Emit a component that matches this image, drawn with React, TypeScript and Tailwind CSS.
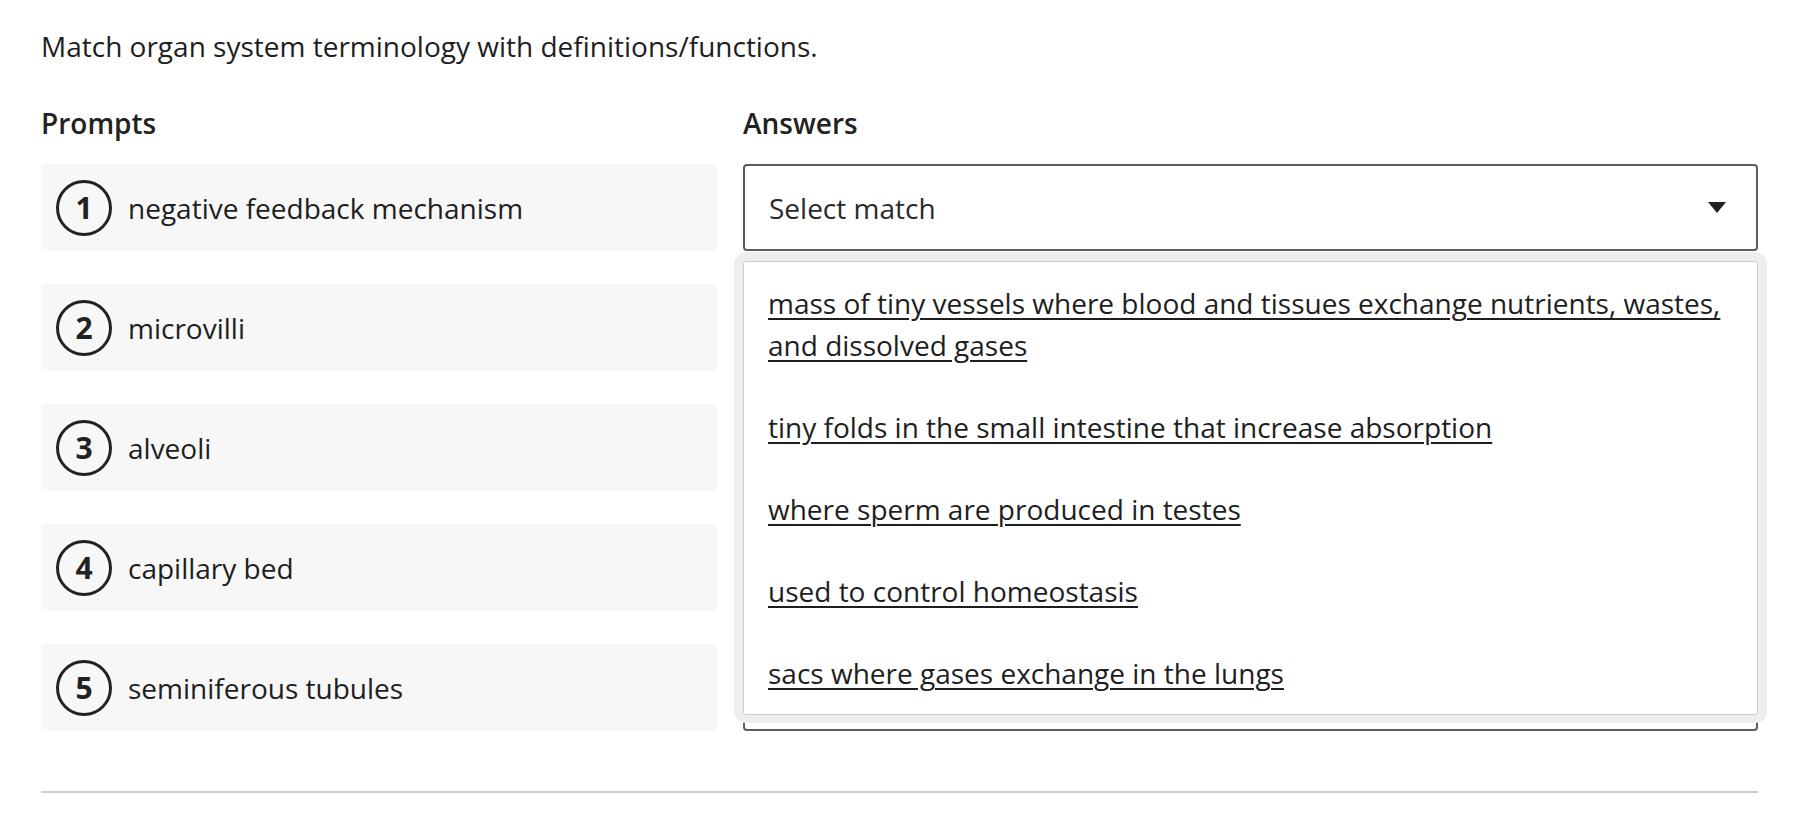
import React from "react"

const prompts = [
  "negative feedback mechanism",
  "microvilli",
  "alveoli",
  "capillary bed",
  "seminiferous tubules",
]

const options = [
  "mass of tiny vessels where blood and tissues exchange nutrients, wastes, and dissolved gases",
  "tiny folds in the small intestine that increase absorption",
  "where sperm are produced in testes",
  "used to control homeostasis",
  "sacs where gases exchange in the lungs",
]

export default function App() {
  return (
    <div className="min-h-screen bg-white pl-[41px] pr-[46px] pt-[25px] font-['Open_Sans',sans-serif] text-[28px] leading-[42px] text-[#1e1e1e]">
      <p>Match organ system terminology with definitions/functions.</p>

      <div className="mt-[35px] flex gap-[26px]">
        {/* Prompts */}
        <div className="w-[676px] shrink-0">
          <h2 className="font-semibold text-[#222]">Prompts</h2>
          <div className="mt-[20px] flex flex-col gap-[33px]">
            {prompts.map((p, i) => (
              <div
                key={p}
                className="flex h-[87px] items-center rounded-[4px] bg-[#f7f7f7] pl-[15px]"
              >
                <span className="flex h-[56px] w-[56px] shrink-0 items-center justify-center rounded-full border-[3.5px] border-[#222] text-[30px] font-bold text-[#222]">
                  {i + 1}
                </span>
                <span className="ml-[16px]">{p}</span>
              </div>
            ))}
          </div>
        </div>

        {/* Answers */}
        <div className="w-[1015px] shrink-0">
          <h2 className="font-semibold text-[#222]">Answers</h2>
          <div className="relative mt-[20px] flex flex-col gap-[33px]">
            {prompts.map((p, i) => (
              <div
                key={p}
                className="flex h-[87px] items-center justify-between rounded-[4px] border-2 border-[#5c5c5c] bg-white pl-[24px] pr-[30px]"
              >
                <span className="text-[#2a2a2a]">{i === 0 ? "Select match" : ""}</span>
                <svg width="18" height="12" viewBox="0 0 18 12">
                  <path d="M0 0 H18 L9 11 Z" fill="#222" />
                </svg>
              </div>
            ))}

            {/* open menu */}
            <div className="absolute left-[-9px] top-[88px] w-[1033px] rounded-[12px] bg-[#eeeeee] p-[9px] pb-[8px]">
              <ul className="rounded-[3px] border border-[#cccccc] bg-white">
                {options.map((o) => (
                  <li key={o} className="py-[20px] pl-[24px] pr-[24px]">
                    <span className="underline decoration-[2px] underline-offset-[4px]">{o}</span>
                  </li>
                ))}
              </ul>
            </div>
          </div>
        </div>
      </div>

      <div className="mt-[60px] h-[2px] w-[1717px] bg-[#cccccc]" />
    </div>
  )
}
